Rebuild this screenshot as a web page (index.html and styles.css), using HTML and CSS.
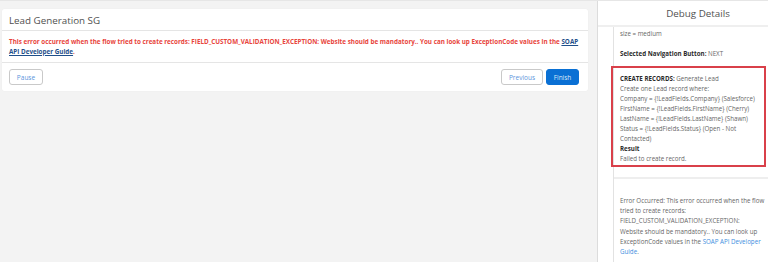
FILE: index.html
```html
<!DOCTYPE html>
<html>
<head>
<meta charset="utf-8">
<link rel="stylesheet" href="styles.css">
</head>
<body>
<div class="page">
  <main class="main">
    <section class="card">
      <header class="card-header">Lead Generation SG</header>
      <div class="card-body">
        <p class="error">This error occurred when the flow tried to create records: FIELD_CUSTOM_VALIDATION_EXCEPTION: Website should be mandatory.. You can look up ExceptionCode values in the <a class="error-link" href="#">SOAP API Developer Guide</a>.</p>
      </div>
      <footer class="card-footer">
        <button class="btn btn-neutral btn-pause">Pause</button>
        <div class="nav">
          <button class="btn btn-neutral btn-prev">Previous</button>
          <button class="btn btn-brand">Finish</button>
        </div>
      </footer>
    </section>
  </main>
  <aside class="panel">
    <header class="panel-header">Debug Details</header>
    <div class="panel-body">
      <div class="log">
        <p class="line">size = medium</p>
        <p class="line nav-line"><b>Selected Navigation Button:</b> NEXT</p>
        <div class="highlight">
          <p class="line nw"><b>CREATE RECORDS:</b> Generate Lead</p>
          <p class="line nw">Create one Lead record where:</p>
          <p class="line nw">Company = {!LeadFields.Company} (Salesforce)</p>
          <p class="line nw">FirstName = {!LeadFields.FirstName} (Cherry)</p>
          <p class="line nw">LastName = {!LeadFields.LastName} (Shawn)</p>
          <p class="line">Status = {!LeadFields.Status} (Open - Not Contacted)</p>
          <p class="line"><b>Result</b></p>
          <p class="line">Failed to create record.</p>
        </div>
        <hr class="divider">
        <p class="line err-occ nw">Error Occurred: This error occurred when the flow<br>tried to create records:<br>FIELD_CUSTOM_VALIDATION_EXCEPTION:<br>Website should be mandatory.. You can look up<br>ExceptionCode values in the <a class="debug-link" href="#">SOAP API Developer<br>Guide</a>.</p>
      </div>
    </div>
  </aside>
</div>
</body>
</html>
```

FILE: styles.css
```css
* { box-sizing: border-box; }
html, body { margin: 0; height: 100%; }
body {
  background: #f3f3f3;
  font-family: "Open Sans", "Noto Sans", sans-serif;
  color: #444;
  overflow: hidden;
}
p { margin: 0; }
.page {
  display: flex;
  height: 262px;
  border-top: 1px solid #e6e6e6;
}
.main {
  flex: 1;
  padding: 8px 9px 0 2px;
}
.card {
  background: #fff;
  border-radius: 2px;
  box-shadow: 0 0 1px rgba(0,0,0,0.08);
}
.card-header {
  height: 22px;
  padding: 1px 7px 0;
  display: flex;
  align-items: center;
  font-size: 9.8px;
  color: #505050;
  border-bottom: 1px solid #e5e5e5;
}
.card-body {
  padding: 6px 3px 5px 7px;
  border-bottom: 1px solid #e5e5e5;
}
.error {
  font-size: 6.3px;
  line-height: 10px;
  font-weight: 700;
  color: #e8453c;
}
.error-link {
  color: #1f4f8a;
  text-decoration: underline;
}
.card-footer {
  display: flex;
  justify-content: space-between;
  align-items: center;
  padding: 6px 9px 6px 7px;
}
.nav { display: flex; gap: 3px; }
.btn {
  height: 16px;
  padding: 0;
  border-radius: 3px;
  font-family: inherit;
  font-size: 6.5px;
  cursor: pointer;
}
.btn-neutral {
  background: #fff;
  border: 1px solid #c9c9c9;
  color: #5d95dc;
}
.btn-pause { width: 34px; }
.btn-prev { width: 42px; }
.btn-brand {
  width: 33px;
  background: #0a70d4;
  border: 1px solid #0a70d4;
  color: #dbe8f8;
}
.panel {
  width: 171px;
  background: #fff;
  border-left: 1px solid #dcdcdc;
  display: flex;
  flex-direction: column;
}
.panel-header {
  height: 26px;
  padding-left: 30px;
  display: flex;
  align-items: center;
  justify-content: center;
  font-size: 9.8px;
  color: #505050;
  border-bottom: 2px solid #efefef;
}
.panel-body {
  flex: 1;
  padding-left: 15px;
}
.log {
  height: 100%;
  border-left: 1px solid #e2e2e2;
  padding: 2px 3px 0 6px;
  font-size: 6.2px;
  color: #666;
}
.line { line-height: 10px; }
.nw { white-space: nowrap; }
.line b { color: #2b2b2b; font-weight: 700; }
.nav-line { margin-top: 10px; }
.highlight {
  margin: 7px -1px 0 -9px;
  padding: 6px 4px 1px 7px;
  border: 2px solid #d9404a;
}
.divider {
  border: 0;
  height: 2px;
  background: #eeeeee;
  margin: 10px -3px 0 -6px;
}
.err-occ { margin-top: 17px; line-height: 10.2px; }
.debug-link { color: #3d8ee0; text-decoration: none; }
```
